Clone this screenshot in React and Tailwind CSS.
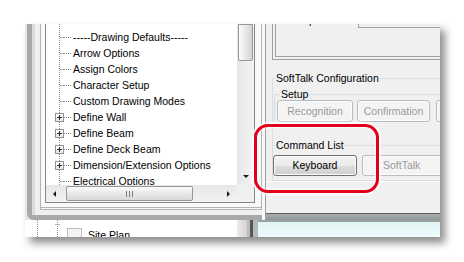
import React from 'react';

// tree rows shown in the options list
const treeRows = [
  { label: '-----Drawing Defaults-----' },
  { label: 'Arrow Options' },
  { label: 'Assign Colors' },
  { label: 'Character Setup' },
  { label: 'Custom Drawing Modes' },
  { label: 'Define Wall', plus: true },
  { label: 'Define Beam', plus: true },
  { label: 'Define Deck Beam', plus: true },
  { label: 'Dimension/Extension Options', plus: true },
  { label: 'Electrical Options' },
];

function Arrow({ dir }) {
  const pts = {
    down: '0,0 6,0 3,3',
    left: '3,0 3,6 0,3',
    right: '0,0 0,6 3,3',
  }[dir];
  const size = dir === 'down' ? 'w-[6px] h-[3px]' : 'w-[3px] h-[6px]';
  return (
    <svg className={size} viewBox={dir === 'down' ? '0 0 6 3' : '0 0 3 6'}>
      <polygon points={pts} fill="#1a1a1a" />
    </svg>
  );
}

function TreeRow({ label, plus }) {
  return (
    <div className="h-[16px] flex items-center pl-[9px]">
      <div className="w-[9px] h-[9px] flex items-center">
        {plus ? (
          <div className="w-[9px] h-[9px] border border-[#919191] bg-[linear-gradient(#ffffff,#e6e6e6)] flex items-center justify-center relative">
            <div className="w-[5px] h-px bg-[#2d2d2d]" />
            <div className="absolute w-px h-[5px] bg-[#2d2d2d]" />
          </div>
        ) : (
          <div className="ml-[5px] w-[4px] border-t border-dotted border-[#8a8a8a]" />
        )}
      </div>
      <div className="w-[7px] border-t border-dotted border-[#8a8a8a]" />
      <span className="ml-[2px] text-[10.5px] leading-none text-black whitespace-nowrap">{label}</span>
    </div>
  );
}

function ListBox() {
  return (
    <div className="h-[179px] w-[210px] border-l border-r border-b border-[#828790] bg-white flex flex-col">
      <div className="flex h-[161px]">
        {/* tree */}
        <div className="relative w-[191px] pt-[5px] overflow-hidden">
          <div className="absolute left-[13px] top-0 bottom-0 border-l border-dotted border-[#8a8a8a]" />
          {treeRows.map((r) => (
            <TreeRow key={r.label} {...r} />
          ))}
        </div>
        {/* vertical scrollbar */}
        <div className="w-[17px] bg-[linear-gradient(90deg,#e7e7e7,#f3f3f3)] flex flex-col">
          <div className="h-[37px] mx-px border border-[#979797] rounded-b-[2px] bg-[linear-gradient(90deg,#fcfcfc,#e4e4e4_60%,#d4d4d4)]" />
          <div className="flex-1" />
          <div className="h-[17px] flex items-center justify-center">
            <Arrow dir="down" />
          </div>
        </div>
      </div>
      <div className="flex h-[17px]">
        {/* horizontal scrollbar */}
        <div className="w-[191px] flex items-center bg-[linear-gradient(#e7e7e7,#f3f3f3)]">
          <div className="w-[17px] h-full flex items-center justify-center">
            <Arrow dir="left" />
          </div>
          <div className="ml-[3px] w-[127px] h-[15px] border border-[#979797] rounded-[2px] bg-[linear-gradient(#fcfcfc,#e8e8e8_50%,#d8d8d8)] flex items-center justify-center gap-[2px]">
            <div className="w-px h-[6px] bg-[#7a7a7a]" />
            <div className="w-px h-[6px] bg-[#7a7a7a]" />
            <div className="w-px h-[6px] bg-[#7a7a7a]" />
          </div>
          <div className="flex-1" />
          <div className="w-[17px] h-full flex items-center justify-center pr-[1px]">
            <Arrow dir="right" />
          </div>
        </div>
        <div className="w-[17px] bg-[#f0f0f0]" />
      </div>
    </div>
  );
}

function LeftWindow() {
  return (
    <div className="w-[237px] h-full pl-[2px] bg-[#e6e6e6] flex">
      <div className="flex-1 border-l-[5px] border-b-[5px] border-[#a8a8a8] rounded-bl-[7px] bg-[#f0f0f0] flex">
        <div className="flex-1 border-l-[3px] border-[#dcdcdc] pl-[5px] pb-[5px] flex">
          <div className="flex-1 border-l border-r border-b-[3px] [border-bottom-style:double] border-[#b4b4b4] bg-[#f9f9f9] pl-[4px] pb-[4px]">
            <ListBox />
          </div>
        </div>
      </div>
    </div>
  );
}

function WinButton({ children, disabled, className }) {
  return (
    <div
      className={
        'shrink-0 rounded-[3px] border flex items-center justify-center text-[10.5px] leading-none shadow-[inset_0_0_0_1px_#fcfcfc] ' +
        (disabled
          ? 'border-[#b7bcc0] bg-[#f4f4f4] text-[#9a9a9a] '
          : 'border-[#707070] bg-[linear-gradient(#f2f2f2_0%,#ebebeb_50%,#dddddd_50%,#cfcfcf_100%)] text-black ') +
        className
      }
    >
      {children}
    </div>
  );
}

function RightPanel() {
  return (
    <div className="w-[178px] h-full pl-[3px] bg-[#f7f7f7] flex">
      <div className="flex-1 border-l border-[#a0a0a0] bg-[#f0f0f0] flex flex-col overflow-hidden">
        {/* top sunken box */}
        <div className="ml-[6px] h-[36px] border-l border-b border-[#a0a0a0] pl-[2px] pb-[2px]">
          <div className="h-full border-l border-b border-[#a0a0a0] relative overflow-hidden">
            <span className="absolute left-[33px] top-[-9px] text-[10.5px] leading-none">p</span>
            <div className="absolute left-[82px] top-0 right-0 h-[4px] border-l border-b border-[#a0a0a0]" />
          </div>
        </div>

        {/* SoftTalk Configuration group */}
        <fieldset className="mt-[12px] ml-[6px] -mr-[4px] border-t border-l border-b border-[#d5dfe5] text-[10.5px] leading-[12px] pb-[4px]">
          <legend className="ml-[2px] px-px text-black">SoftTalk Configuration</legend>
          <fieldset className="mt-[4px] ml-px border-t border-l border-[#d5dfe5] rounded-tl-[3px]">
            <legend className="ml-[5px] px-px text-black">Setup</legend>
            <div className="flex gap-[4px] pl-[2px]">
              <WinButton disabled className="h-[22px] w-[76px]">Recognition</WinButton>
              <WinButton disabled className="h-[22px] w-[73px] mr-[2px]">Confirmation</WinButton>
              <WinButton disabled className="h-[22px] w-[40px]"> </WinButton>
            </div>
          </fieldset>
          <fieldset className="mt-[17px] border-t border-[#d5dfe5]">
            <legend className="ml-[2px] px-px text-black">Command List</legend>
            <div className="flex gap-[5px] mt-[4px]">
              <WinButton className="h-[21px] w-[84px]">Keyboard</WinButton>
              <WinButton disabled className="h-[21px] w-[90px] justify-start pl-[20px]">SoftTalk</WinButton>
            </div>
          </fieldset>
        </fieldset>
        <div className="h-px bg-white" />
        <div className="flex-1" />
        <div className="h-[7px] border-t border-[#5b5b5b] bg-[linear-gradient(#a9afaf,#8e9595)]" />
      </div>
    </div>
  );
}

function BottomStrip() {
  return (
    <div className="h-[17px] flex">
      <div className="w-[212px] bg-white flex items-start pl-[12px] overflow-hidden">
        <div className="h-full border-l border-dotted border-[#8a8a8a]" />
        <div className="ml-[19px] h-full border-l border-dotted border-[#8a8a8a] relative">
          <div className="absolute left-[-3px] top-[4px] w-[5px] border-t border-[#b0b0b0]" />
        </div>
        <div className="ml-[9px] mt-[8px] w-[15px] h-[12px] border border-[#bdbdbd] bg-[#f4f4f4] shrink-0" />
        <span className="ml-[6px] mt-[10px] text-[10.5px] leading-none text-black whitespace-nowrap">Site Plan</span>
      </div>
      <div className="w-[10px] bg-[linear-gradient(90deg,#ececec,#d2d2d2)]" />
      <div className="w-[3px] bg-[#bdbdbd]" />
      <div className="w-[3px] bg-[#575757]" />
      <div className="w-[5px] bg-[#b2bbbb]" />
      <div className="flex-1 border-t-2 border-[#9aa1a1] bg-[linear-gradient(#dff4f4,#eefcfc)]" />
    </div>
  );
}

export default function App() {
  return (
    <div className="w-[464px] h-[262px] bg-white pt-[24px] pl-[25px] font-['Liberation_Sans',Arial,sans-serif]">
      <div className="relative w-[415px] h-[213px] bg-[#f0f0f0] flex flex-col shadow-[5px_6px_8px_rgba(0,0,0,0.45)]">
        <div className="h-[196px] flex overflow-hidden">
          <LeftWindow />
          <RightPanel />
        </div>
        <BottomStrip />

        {/* red annotation around Command List */}
        <div className="absolute left-[229px] top-[100px] w-[125px] h-[69px] border-[3px] border-[#e2001a] rounded-[14px] shadow-[0_0_2px_2px_rgba(255,255,255,0.85),inset_0_0_2px_1px_rgba(255,255,255,0.85)]" />
      </div>
    </div>
  );
}
